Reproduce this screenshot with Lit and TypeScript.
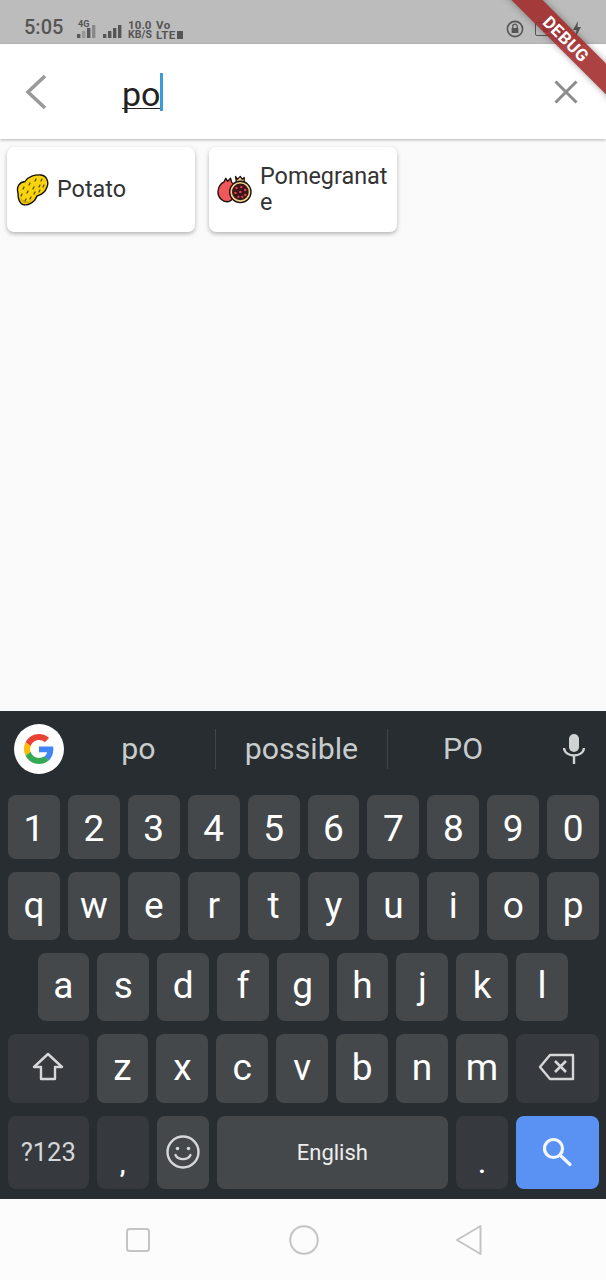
import { LitElement, html, css, svg } from "lit";
import { customElement } from "lit/decorators.js";

type Key = { t?: string; cls?: string; icon?: string };

const chars = (s: string): Key[] => s.split("").map((t) => ({ t }));

const ROWS: { cls: string; keys: Key[] }[] = [
  { cls: "r1", keys: chars("1234567890") },
  { cls: "r2", keys: chars("qwertyuiop") },
  { cls: "r3", keys: chars("asdfghjkl") },
  {
    cls: "r4",
    keys: [{ icon: "shift", cls: "wide dark" }, ...chars("zxcvbnm"), { icon: "del", cls: "wide dark" }],
  },
  {
    cls: "r5",
    keys: [
      { t: "?123", cls: "wide dark sym" },
      { t: ",", cls: "dark punct" },
      { icon: "emoji" },
      { t: "English", cls: "space" },
      { t: ".", cls: "dark punct" },
      { icon: "search", cls: "wide blue" },
    ],
  },
];

const ICONS: Record<string, unknown> = {
  shift: svg`<svg width="34" height="32" viewBox="0 0 34 32" fill="none" stroke="#d5d7d8" stroke-width="2.4" stroke-linejoin="round"><path d="M17 3 L31 16 L24 16 L24 28 L10 28 L10 16 L3 16 Z"/></svg>`,
  del: svg`<svg width="38" height="30" viewBox="0 0 38 30" fill="none" stroke="#d5d7d8" stroke-width="2.4" stroke-linejoin="round"><path d="M12 3 H35 V27 H12 L2 15 Z"/><path d="M17 9 L28 20 M28 9 L17 20" stroke-width="2.6"/></svg>`,
  emoji: svg`<svg width="36" height="36" viewBox="0 0 36 36" fill="none" stroke="#d5d7d8" stroke-width="2.4"><circle cx="18" cy="18" r="15.5"/><circle cx="12.5" cy="14.5" r="1.8" fill="#d5d7d8" stroke="none"/><circle cx="23.5" cy="14.5" r="1.8" fill="#d5d7d8" stroke="none"/><path d="M10.5 21 C13 26.5 23 26.5 25.5 21" stroke-linecap="round"/></svg>`,
  search: svg`<svg class="mag" width="32" height="32" viewBox="0 0 32 32" fill="none" stroke="#f4f7fd" stroke-width="3.2" stroke-linecap="round"><circle cx="12.5" cy="12.5" r="9"/><path d="M19.5 19.5 L29 28.5"/></svg>`,
};

const potato = svg`<svg width="34" height="34" viewBox="0 0 34 34">
  <g stroke="#161204" stroke-width="1.4" fill="#f8d40c">
    <path d="M3 20 C1 13 5 9 10 8.5 C13 3.5 20 1.5 26 2 C32 3 34 9 32 14 C30 20 26 22 22 23 C20 29 13 33 8 31.5 C4 30 3 25 3 20 Z"/>
  </g>
  <g stroke="#5c4a06" stroke-width="1.3" stroke-linecap="round" fill="none">
    <path d="M9 14l-1 2M15 10l-1 2M21 6l-1 2M27 6l-1 2M7 21l-1 2M13 18l-1 2M19 14l-1 2M25 12l-1 2M29 12l-1 2M11 26l-1 2M16 24l-1 2M20 19l-1 2M25 17l-1 2"/>
  </g>
  <path d="M5 24 C8 29 13 30 17 27 C14 31 7 32 5 24Z" fill="#c99a06"/>
</svg>`;

const pomegranate = svg`<svg width="35" height="30" viewBox="0 0 36 30">
  <path d="M9 3 L11 6 L14 3 L15 7 C20 10 20 24 12 27 C6 28 1 23 1 17 C1 12 4 8 7 7 Z" fill="#f1565a" stroke="#1c1010" stroke-width="1.4" stroke-linejoin="round"/>
  <path d="M19 1 L21 4 L24 1 L26 4 L28 2 L28 7 L20 7 Z" fill="#f2d489" stroke="#1c1010" stroke-width="1.3" stroke-linejoin="round"/>
  <circle cx="24" cy="17" r="11" fill="#f2d489" stroke="#1c1010" stroke-width="1.4"/>
  <circle cx="24" cy="17" r="8.6" fill="#3d141b"/>
  <g fill="#e8474c">
    <circle cx="20" cy="13" r="1.2"/><circle cx="25" cy="12" r="1.2"/><circle cx="29" cy="15" r="1.2"/>
    <circle cx="19" cy="18" r="1.2"/><circle cx="24" cy="17" r="1.2"/><circle cx="29" cy="20" r="1.2"/>
    <circle cx="22" cy="22" r="1.2"/><circle cx="26" cy="22" r="1.2"/>
  </g>
</svg>`;

const signal = (first: number) => svg`<svg width="20" height="13" viewBox="0 0 20 13" fill="#565656">
  <rect x="0" y="9" width="3.4" height="4"/>
  <rect x="5" y="6" width="3.4" height="7" opacity="${first}"/>
  <rect x="10" y="3" width="3.4" height="10"/>
  <rect x="15" y="0" width="3.4" height="13" opacity="${first < 1 ? 0.5 : 1}"/>
</svg>`;

@customElement("app-root")
export class AppRoot extends LitElement {
  static styles = css`
    :host {
      display: flex;
      flex-direction: column;
      position: relative;
      width: 606px;
      height: 1280px;
      overflow: hidden;
      background: #fafafa;
      font-family: Roboto, "Liberation Sans", sans-serif;
    }
    .status {
      height: 44px;
      flex: none;
      box-sizing: border-box;
      background: #bcbcbc;
      display: flex;
      align-items: flex-end;
      padding: 0 25px 3px 24px;
      color: #555;
    }
    .time { font-size: 20px; font-weight: 500; line-height: 27px; width: 53px; }
    .net { position: relative; display: flex; align-items: flex-end; margin-bottom: 3px; }
    .net small { position: absolute; left: 1px; top: -5px; font-size: 9px; font-weight: 700; line-height: 9px; }
    .net-a { width: 26px; }
    .net-b { width: 24px; }
    .rate, .lte {
      display: flex;
      flex-direction: column;
      font-weight: 700;
      line-height: 10px;
      margin-bottom: 1px;
    }
    .rate { width: 29px; font-size: 10.5px; letter-spacing: 0.1px; padding-left: 1px; box-sizing: border-box; }
    .rate span:first-child { font-size: 11.5px; }
    .lte { font-size: 11.5px; letter-spacing: 0.4px; }
    .lte-line { display: flex; align-items: center; gap: 1px; }
    .lte-line i { width: 6px; height: 8px; background: #555; display: block; }
    .grow { flex: 1; }
    .right { display: flex; align-items: center; gap: 11px; margin-bottom: 3px; }
    .batt {
      width: 27px; height: 14px; border: 1px solid #555; border-radius: 2px; box-sizing: border-box;
      font-size: 11px; font-weight: 700; line-height: 12px; text-align: center;
    }
    .bar {
      height: 95px;
      flex: none;
      box-sizing: border-box;
      background: #fff;
      box-shadow: 0 1px 3px rgba(0, 0, 0, 0.28);
      display: flex;
      align-items: center;
      padding: 0 28px 0 24px;
      position: relative;
    }
    .field {
      flex: 1;
      margin-left: 74px;
      display: flex;
      height: 40px;
      margin-top: 2px;
    }
    .query {
      font-size: 34px;
      line-height: 36px;
      color: #222;
      border-bottom: 1.5px solid #222;
      height: 32px;
      margin-top: 3px;
      box-sizing: content-box;
    }
    .caret { width: 3px; height: 38px; background: #3c9ad8; }
    .grid {
      flex: 1;
      display: grid;
      grid-template-columns: repeat(3, 188px);
      grid-auto-rows: 85px;
      gap: 14px;
      padding: 8px 7px;
    }
    .card {
      background: #fff;
      border-radius: 7px;
      box-shadow: 0 2px 4px rgba(0, 0, 0, 0.28);
      display: flex;
      align-items: center;
      padding: 0 8px;
      gap: 8px;
    }
    .card svg { flex: none; }
    .card span {
      flex: 1;
      min-width: 0;
      font-size: 23.4px;
      line-height: 26px;
      color: #333;
      word-break: break-all;
      padding-bottom: 1px;
    }
    .pom span { margin-top: -1px; }
    .kb {
      height: 488px;
      flex: none;
      box-sizing: border-box;
      background: #272d31;
    }
    .sugg {
      height: 84px;
      display: grid;
      grid-template-columns: 77px 139px 172px 150px 1fr;
      align-items: center;
      color: #c9cccd;
      font-size: 30.3px;
      padding-bottom: 8px;
      box-sizing: border-box;
    }
    .g {
      width: 50px; height: 50px; margin-left: 14px; border-radius: 50%; background: #fff;
      display: flex; align-items: center; justify-content: center;
    }
    .word { text-align: center; height: 40px; line-height: 40px; border-right: 1px solid #3f464b; }
    .word.first { padding-right: 15px; box-sizing: border-box; }
    .word.last { border-right: none; }
    .word.mid { box-sizing: border-box; }
    .mic { display: flex; justify-content: center; padding-left: 3px; }
    .rows { display: flex; flex-direction: column; gap: 13px; padding: 0 7px 0 8px; }
    .row { display: flex; gap: 8px; }
    .r1 { height: 63.5px; }
    .r2, .r3 { height: 68px; }
    .r3 { padding: 0 31px 0 29.5px; }
    .r4 { height: 69px; }
    .r5 { height: 73px; }
    .key {
      flex: 1 1 0;
      min-width: 0;
      box-sizing: border-box;
      background: #44484b;
      border-radius: 8px;
      color: #fff;
      font-size: 37px;
      display: flex;
      align-items: center;
      justify-content: center;
    }
    .r1 .key { padding-top: 4px; font-size: 37px; }
    .r3 .key, .r4 .key { padding-bottom: 2px; }
    .wide { flex: 0 0 80.5px; }
    .r4 .wide:last-child, .r5 .wide:last-child { flex-basis: 83px; }
    .dark { background: #363a3e; }
    .blue { background: #5a92f4; }
    .mag { margin-right: 2px; }
    .key.sym { font-size: 25.5px; color: #d5d7d8; }
    .key.punct { font-size: 24px; font-weight: 700; align-items: flex-end; padding-bottom: 12px; line-height: 24px; }
    .key.space { flex: 0 0 231px; font-size: 22px; color: #eee; }
    .nav {
      height: 81px;
      flex: none;
      background: #fcfcfc;
      display: grid;
      grid-template-columns: 276px 56px 1fr;
      align-items: center;
    }
    .nav svg { display: block; }
    .nav .sq { justify-self: end; margin-right: 125px; }
    .nav .ci { justify-self: center; }
    .nav .tr { margin-left: 123px; }
    .banner-clip {
      position: absolute;
      top: 0;
      right: 0;
      width: 120px;
      height: 120px;
      overflow: hidden;
      pointer-events: none;
    }
    .banner {
      position: absolute;
      left: 0;
      top: 28px;
      width: 160px;
      height: 22px;
      transform: rotate(45deg);
      background: rgba(160, 40, 40, 0.88);
      box-shadow: 0 0 7px rgba(0, 0, 0, 0.35);
      color: #fff;
      font-size: 17px;
      font-weight: 700;
      line-height: 22px;
      text-align: center;
      letter-spacing: 0.5px;
    }
  `;

  private renderKey(k: Key) {
    return html`<div class="key ${k.cls ?? ""}">${k.icon ? ICONS[k.icon] : k.t}</div>`;
  }

  render() {
    return html`
      <div class="status">
        <div class="time">5:05</div>
        <div class="net net-a"><small>4G</small>${signal(0.35)}</div>
        <div class="net net-b">${signal(1)}</div>
        <div class="rate"><span>10.0</span><span>KB/S</span></div>
        <div class="lte"><span>Vo</span><div class="lte-line"><span>LTE</span><i></i></div></div>
        <div class="grow"></div>
        <div class="right">
          <svg width="18" height="18" viewBox="0 0 18 18" fill="none" stroke="#555" stroke-width="1.6"><circle cx="9" cy="9" r="7.6"/><rect x="5.6" y="8" width="6.8" height="5" fill="#555" stroke="none"/><path d="M6.8 8 V6.4 a2.2 2.2 0 0 1 4.4 0 V8" stroke-width="1.3"/></svg>
          <div class="batt">85</div>
          <svg width="8" height="16" viewBox="0 0 8 16" fill="#555"><path d="M5 0 L0 9 H3.5 L2.5 16 L8 6 H4.5 Z"/></svg>
        </div>
      </div>
      <div class="bar">
        <svg width="24" height="36" viewBox="0 0 24 36" fill="none" stroke="#999" stroke-width="3.6"><path d="M21 2 L4 18 L21 34"/></svg>
        <div class="field"><div class="query">po</div><div class="caret"></div></div>
        <svg width="24" height="24" viewBox="0 0 24 24" fill="none" stroke="#8c8c8c" stroke-width="3"><path d="M1.5 1.5 L22.5 22.5 M22.5 1.5 L1.5 22.5"/></svg>
      </div>
      <div class="grid">
        <div class="card">${potato}<span>Potato</span></div>
        <div class="card pom">${pomegranate}<span>Pomegranate</span></div>
      </div>
      <div class="kb">
        <div class="sugg">
          <div class="g">
            <svg width="30" height="30" viewBox="0 0 48 48">
              <path fill="#EA4335" d="M24 9.5c3.54 0 6.71 1.22 9.21 3.6l6.85-6.85C35.9 2.38 30.47 0 24 0 14.62 0 6.51 5.38 2.56 13.22l7.98 6.19C12.43 13.72 17.74 9.5 24 9.5z"/>
              <path fill="#4285F4" d="M46.98 24.55c0-1.57-.15-3.09-.38-4.55H24v9.02h12.94c-.58 2.96-2.26 5.48-4.78 7.18l7.73 6c4.51-4.18 7.09-10.36 7.09-17.65z"/>
              <path fill="#FBBC05" d="M10.53 28.59c-.48-1.45-.76-2.99-.76-4.59s.27-3.14.76-4.59l-7.98-6.19C.92 16.46 0 20.12 0 24c0 3.88.92 7.54 2.56 10.78l7.97-6.19z"/>
              <path fill="#34A853" d="M24 48c6.48 0 11.93-2.13 15.89-5.81l-7.73-6c-2.15 1.45-4.92 2.3-8.16 2.3-6.26 0-11.57-4.22-13.47-9.91l-7.98 6.19C6.51 42.62 14.62 48 24 48z"/>
            </svg>
          </div>
          <div class="word first">po</div>
          <div class="word mid">possible</div>
          <div class="word last">PO</div>
          <div class="mic">
            <svg width="24" height="32" viewBox="0 0 24 32" fill="none" stroke="#d0d3d4" stroke-width="2.4"><rect x="7" y="1" width="10" height="18" rx="5" fill="#d0d3d4" stroke="none"/><path d="M2 15 C3 25 21 25 22 15"/><path d="M12 23 V31"/></svg>
          </div>
        </div>
        <div class="rows">
          ${ROWS.map((r) => html`<div class="row ${r.cls}">${r.keys.map((k) => this.renderKey(k))}</div>`)}
        </div>
      </div>
      <div class="nav">
        <svg class="sq" width="26" height="26" viewBox="0 0 26 26" fill="none" stroke="#c4c4c4" stroke-width="2"><rect x="2" y="2" width="22" height="22" rx="2.5"/></svg>
        <svg class="ci" width="30" height="30" viewBox="0 0 32 32" fill="none" stroke="#c4c4c4" stroke-width="2.1"><circle cx="16" cy="16" r="14.7"/></svg>
        <svg class="tr" width="28" height="32" viewBox="0 0 28 32" fill="none" stroke="#c4c4c4" stroke-width="2" stroke-linejoin="round"><path d="M25.5 2 V30 L2 16 Z"/></svg>
      </div>
      <div class="banner-clip"><div class="banner">DEBUG</div></div>
    `;
  }
}
